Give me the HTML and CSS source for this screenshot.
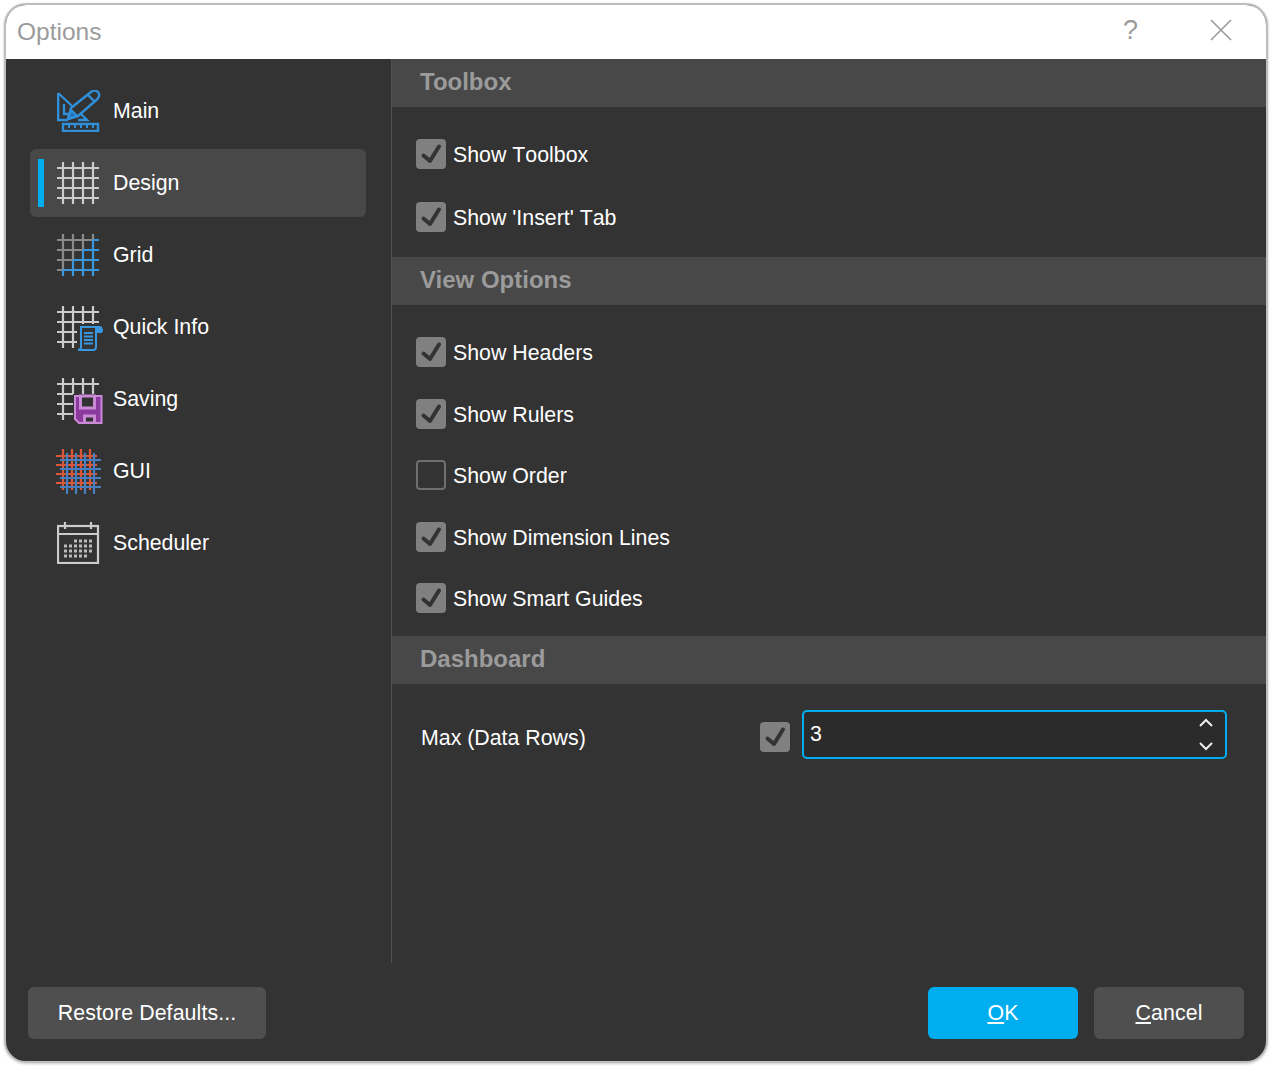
FILE: index.html
```html
<!DOCTYPE html>
<html lang="en">
<head>
<meta charset="utf-8">
<title>Options</title>
<link rel="stylesheet" href="styles.css">
</head>
<body>
<div class="window">
  <header class="titlebar">
    <span class="title">Options</span>
    <span class="help">?</span>
    <svg class="close" width="22" height="22" viewBox="0 0 22 22"><path d="M1 1L21 21M21 1L1 21" stroke="#9a9a9a" stroke-width="1.6" fill="none"/></svg>
  </header>
  <div class="content">
    <nav class="sidebar">
      <div class="nav-item">
        <svg class="nav-icon" width="44" height="42" viewBox="0 0 44 42" fill="none" stroke="#2f8fd8" stroke-width="2.4">
          <path d="M1.2 3V30H11M21 30H30L24 24M1.2 3L15 16M7 14V24H12"/>
          <path d="M11 29L14 18L34 2C36 0 40 0 41.5 3C43 5 42 7 40.5 9L21 26Z" stroke-linejoin="round"/>
          <path d="M31 5L38 12"/>
          <path d="M11 29L14 20L20 26Z" fill="#1f6fb5"/>
          <rect x="6" y="34" width="35" height="7"/>
          <path stroke-width="2" d="M12 35V38M18 35V38M24 35V38M30 35V38M36 35V38"/>
        </svg>
        <span>Main</span>
      </div>
      <div class="nav-item active">
        <i class="indicator"></i>
        <svg class="nav-icon" width="44" height="42" viewBox="0 0 44 42" fill="none" stroke="#cccccc" stroke-width="2.2">
          <path d="M6 0V42M16 0V42M26 0V42M36 0V42M0 6H42M0 16H42M0 26H42M0 36H42"/>
        </svg>
        <span>Design</span>
      </div>
      <div class="nav-item">
        <svg class="nav-icon" width="44" height="42" viewBox="0 0 44 42" fill="none" stroke-width="2.2">
          <path stroke="#8a8a8a" d="M6 0V36M16 0V26M26 0V16M36 0V6M0 6H36M0 16H26M0 26H16M0 36H6"/>
          <path stroke="#3a96dd" d="M6 36V42M16 26V42M26 16V42M36 6V42M36 6H42M26 16H42M16 26H42M6 36H42"/>
        </svg>
        <span>Grid</span>
      </div>
      <div class="nav-item">
        <svg class="nav-icon icon-tall" width="46" height="46" viewBox="0 0 46 46" fill="none">
          <path stroke="#cccccc" stroke-width="2.2" d="M6 0V42M16 0V42M26 0V18M36 0V18M0 6H42M0 16H42M0 26H20M0 36H20"/>
          <path stroke="#3a96dd" stroke-width="2" d="M24 21V41C24 43 23 44 21 44H36C38 44 39 43 39 41V21ZM39 21H43C44.5 21 45 23 45 26"/>
          <path fill="#3a96dd" d="M40 22H45V27H40Z"/>
          <path stroke="#3a96dd" stroke-width="2" d="M27 27H36M27 30.5H36M27 34H36M27 37.5H36"/>
        </svg>
        <span>Quick Info</span>
      </div>
      <div class="nav-item">
        <svg class="nav-icon icon-tall" width="46" height="46" viewBox="0 0 46 46" fill="none">
          <path stroke="#cccccc" stroke-width="2.2" d="M6 0V42M16 0V16M26 0V16M36 0V16M0 6H42M0 16H16M0 26H16M0 36H16"/>
          <path fill="#8d3a9e" stroke="#c98ad6" stroke-width="2" d="M18 18H44.5V45H22L18 41Z"/>
          <rect x="23.5" y="18" width="14" height="12" fill="#333333" stroke="#c98ad6" stroke-width="3"/>
          <rect x="27.5" y="38" width="10" height="7" fill="#333333" stroke="#c98ad6" stroke-width="3"/>
        </svg>
        <span>Saving</span>
      </div>
      <div class="nav-item">
        <svg class="nav-icon gui-icon" width="46" height="46" viewBox="0 0 46 46" fill="none" stroke-width="2.2">
          <path stroke="#d9583c" d="M7 0V41M16 0V41M25 0V41M34 0V41M0 7H41M0 16H41M0 25H41M0 34H41"/>
          <path stroke="#4a7fbe" d="M11 4V45M20 4V45M29 4V45M38 4V45M4 11H45M4 20H45M4 29H45M4 38H45"/>
        </svg>
        <span>GUI</span>
      </div>
      <div class="nav-item">
        <svg class="nav-icon" width="44" height="42" viewBox="0 0 44 42" fill="none" stroke="#cccccc" stroke-width="2.2">
          <rect x="1" y="4" width="40" height="37"/>
          <path d="M1 12H41M8 0V7M34 0V7"/>
          <path stroke="#bbbbbb" stroke-width="3" stroke-dasharray="3 2" d="M17 19H36M7 24H36M7 29H36M7 34H31"/>
        </svg>
        <span>Scheduler</span>
      </div>
    </nav>
    <main class="panel">
      <h2 class="section-head">Toolbox</h2>
      <div class="section section-toolbox">
        <label class="check-row"><span class="box checked"><svg width="30" height="30" viewBox="0 0 30 30"><path d="M7.5 16.5L14 22L23 7.5" class="tick"/></svg></span>Show Toolbox</label>
        <label class="check-row"><span class="box checked"><svg width="30" height="30" viewBox="0 0 30 30"><path d="M7.5 16.5L14 22L23 7.5" class="tick"/></svg></span>Show 'Insert' Tab</label>
      </div>
      <h2 class="section-head">View Options</h2>
      <div class="section section-view">
        <label class="check-row"><span class="box checked"><svg width="30" height="30" viewBox="0 0 30 30"><path d="M7.5 16.5L14 22L23 7.5" class="tick"/></svg></span>Show Headers</label>
        <label class="check-row"><span class="box checked"><svg width="30" height="30" viewBox="0 0 30 30"><path d="M7.5 16.5L14 22L23 7.5" class="tick"/></svg></span>Show Rulers</label>
        <label class="check-row"><span class="box"></span>Show Order</label>
        <label class="check-row"><span class="box checked"><svg width="30" height="30" viewBox="0 0 30 30"><path d="M7.5 16.5L14 22L23 7.5" class="tick"/></svg></span>Show Dimension Lines</label>
        <label class="check-row"><span class="box checked"><svg width="30" height="30" viewBox="0 0 30 30"><path d="M7.5 16.5L14 22L23 7.5" class="tick"/></svg></span>Show Smart Guides</label>
      </div>
      <h2 class="section-head">Dashboard</h2>
      <div class="max-row">
        <span class="max-label">Max (Data Rows)</span>
        <span class="box checked"><svg width="30" height="30" viewBox="0 0 30 30"><path d="M7.5 16.5L14 22L23 7.5" class="tick"/></svg></span>
        <div class="spin-input">
          <span class="spin-value">3</span>
          <span class="spin-arrows">
            <svg width="14" height="9" viewBox="0 0 14 9"><path d="M1 8L7 2L13 8" class="chev"/></svg>
            <svg width="14" height="9" viewBox="0 0 14 9"><path d="M1 1L7 7L13 1" class="chev"/></svg>
          </span>
        </div>
      </div>
    </main>
  </div>
  <footer class="footer">
    <button class="btn btn-restore" type="button">Restore Defaults...</button>
    <div class="footer-right">
      <button class="btn btn-ok" type="button"><u>O</u>K</button>
      <button class="btn" type="button"><u>C</u>ancel</button>
    </div>
  </footer>
</div>
</body>
</html>
```
FILE: styles.css
```css
* { box-sizing: border-box; }
html, body { margin: 0; padding: 0; background: #ffffff; }
body { width: 1272px; height: 1068px; overflow: hidden; font-family: "Liberation Sans", Arial, sans-serif; font-size: 21.33px; color: #ffffff; }
.window { margin: 3px 4px 0 4px; width: 1264px; height: 1060px; border: 2px solid #bdbdbd; border-radius: 22px; overflow: hidden; background: #333333; display: flex; flex-direction: column; box-shadow: 0 1px 3px rgba(0,0,0,.2); }
.titlebar { height: 54px; flex: none; background: #ffffff; display: flex; align-items: center; padding: 0 34px 0 11px; }
.title { font-size: 24.5px; color: #9b9b9b; flex: 1; }
.help { font-size: 27px; color: #9a9a9a; margin-right: 72px; line-height: 1; position: relative; top: -2px; }
.close { position: relative; top: -2px; }
.content { flex: 1; display: flex; min-height: 0; }
.sidebar { width: 386px; flex: none; border-right: 1px solid #505050; padding: 18px 25px 0 24px; display: flex; flex-direction: column; gap: 4px; }
.nav-item { height: 68px; display: flex; align-items: center; padding-left: 27px; border-radius: 6px; position: relative; }
.nav-item span { position: absolute; left: 83px; }
.nav-item.active { background: #484848; }
.indicator { position: absolute; left: 8px; top: 10px; width: 6px; height: 48px; background: #00aeef; }
.nav-icon { flex: none; }
.icon-tall { margin-top: 4px; }
.gui-icon { margin-left: -1px; margin-top: 2px; }
.panel { flex: 1; min-width: 0; }
.section-head { margin: 0; height: 48px; background: #484848; color: #9b9b9b; font-size: 24px; font-weight: 700; line-height: 46px; padding-left: 28px; }
.section { display: flex; flex-direction: column; padding-left: 24px; }
.section-toolbox { padding-top: 32px; padding-bottom: 25px; gap: 33px; }
.section-view { padding-top: 32px; padding-bottom: 23px; gap: 31px; }
.section-view .check-row:nth-child(even) { margin-top: 1px; }
.check-row { display: flex; align-items: flex-start; height: 30px; gap: 7px; line-height: 32px; font-kerning: none; }
.box { width: 30px; height: 30px; flex: none; border-radius: 4px; border: 2px solid #6f6f6f; display: block; }
.box.checked { background: #808080; border: 0; }
.box svg { display: block; }
.tick { fill: none; stroke: #333333; stroke-width: 4; stroke-linecap: round; stroke-linejoin: round; }
.max-row { display: flex; align-items: flex-start; padding: 26px 0 0 29px; }
.max-row .box { margin-top: 12px; }
.max-label { width: 339px; margin-top: 12px; line-height: 32px; }
.spin-input { margin-left: 12px; width: 425px; height: 49px; border: 2px solid #00aeef; border-radius: 5px; background: #2b2b2b; display: flex; justify-content: space-between; align-items: center; padding: 0 12px 0 6px; }
.spin-arrows { display: flex; flex-direction: column; gap: 15px; }
.spin-arrows svg { display: block; }
.chev { fill: none; stroke: #eeeeee; stroke-width: 2; }
.footer { flex: none; height: 98px; display: flex; justify-content: space-between; padding: 24px 22px 0 22px; align-items: flex-start; }
.footer-right { display: flex; gap: 16px; }
.btn { height: 52px; width: 150px; border: 0; border-radius: 6px; background: #4f4f4f; color: #ffffff; font: inherit; letter-spacing: .1px; padding: 0; }
.btn-restore { width: 238px; }
.btn-ok { background: #00aeef; }
```
